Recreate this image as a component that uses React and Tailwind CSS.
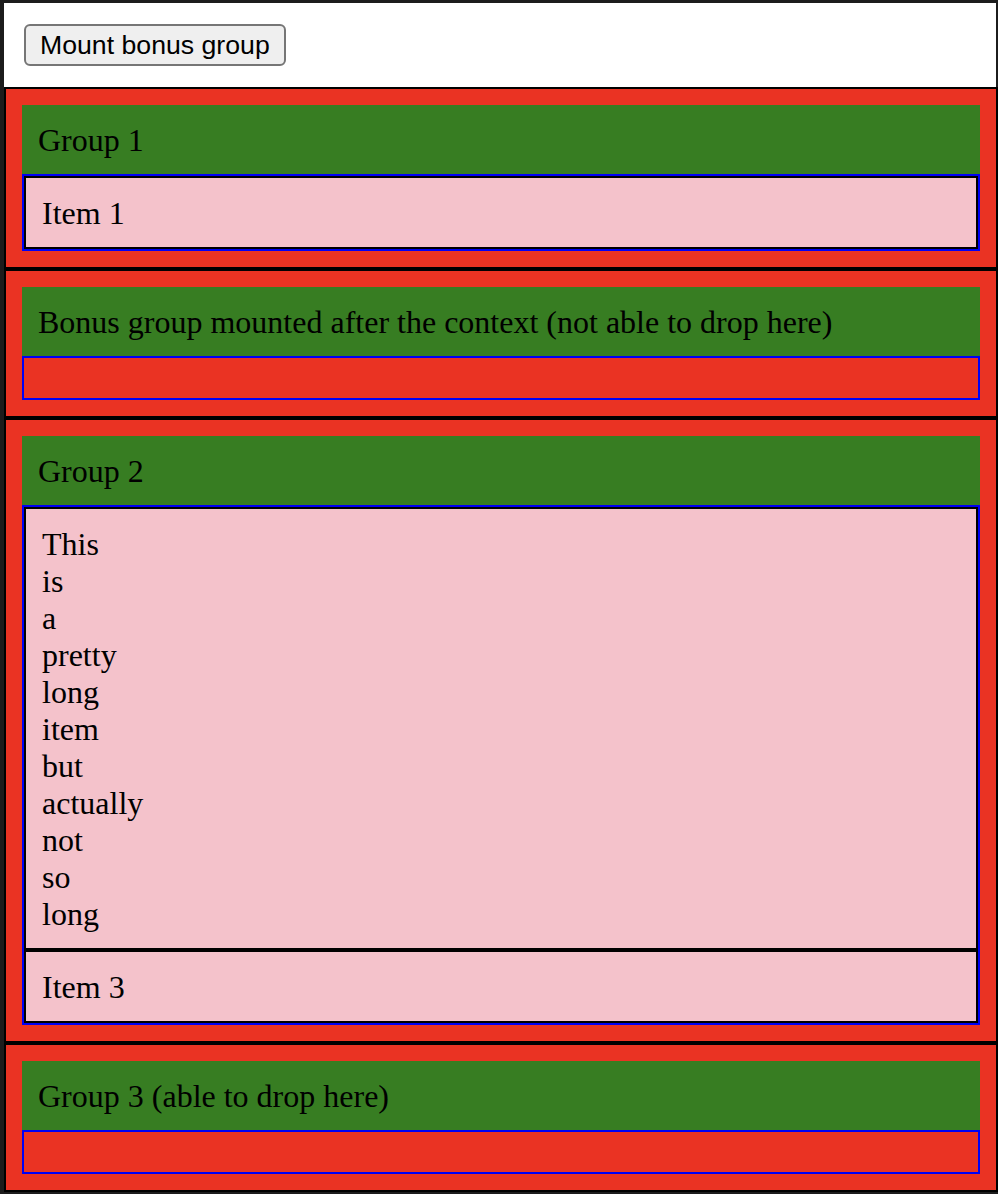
import React from "react";

const serif = { fontFamily: '"Liberation Serif", "Times New Roman", serif' };

function Header({ children }) {
  return (
    <div className="bg-[#377d22] px-[16px] pb-[15px] pt-[17px] text-[32px] leading-[37px] text-black">
      {children}
    </div>
  );
}

function Item({ children }) {
  return (
    <div className="border-2 border-black bg-[#f4c2cb] px-[16px] pb-[15px] pt-[17px] text-[32px] leading-[37px] text-black">
      {children}
    </div>
  );
}

function Group({ title, items = [] }) {
  return (
    <div className="border-2 border-black bg-[#ea3323] p-[16px]">
      <Header>{title}</Header>
      <div className="flex min-h-[44px] flex-col border-2 border-[#0000f5]">
        {items.map((it, i) => (
          <Item key={i}>{it}</Item>
        ))}
      </div>
    </div>
  );
}

export default function App() {
  const longWords = "This is a pretty long item but actually not so long".split(" ");
  return (
    <div className="h-[1194px] w-[998px] overflow-hidden bg-[#1c1c1c] pl-[4px] pt-[3px]" style={serif}>
      <div className="mr-[2px] flex h-[84px] items-center bg-white pl-[20px]">
        <button
          className="h-[42px] rounded-[6px] border-2 border-[#767676] bg-[#efefef] px-[14px] text-[26.67px] leading-[30px] text-black"
          style={{ fontFamily: '"Liberation Sans", Arial, sans-serif' }}
        >
          Mount bonus group
        </button>
      </div>
      <div className="flex flex-col">
        <Group title="Group 1" items={["Item 1"]} />
        <Group title="Bonus group mounted after the context (not able to drop here)" />
        <Group
          title="Group 2"
          items={[
            <div className="flex flex-col">
              {longWords.map((w, i) => (
                <span key={i}>{w}</span>
              ))}
            </div>,
            "Item 3",
          ]}
        />
        <Group title="Group 3 (able to drop here)" />
      </div>
    </div>
  );
}
